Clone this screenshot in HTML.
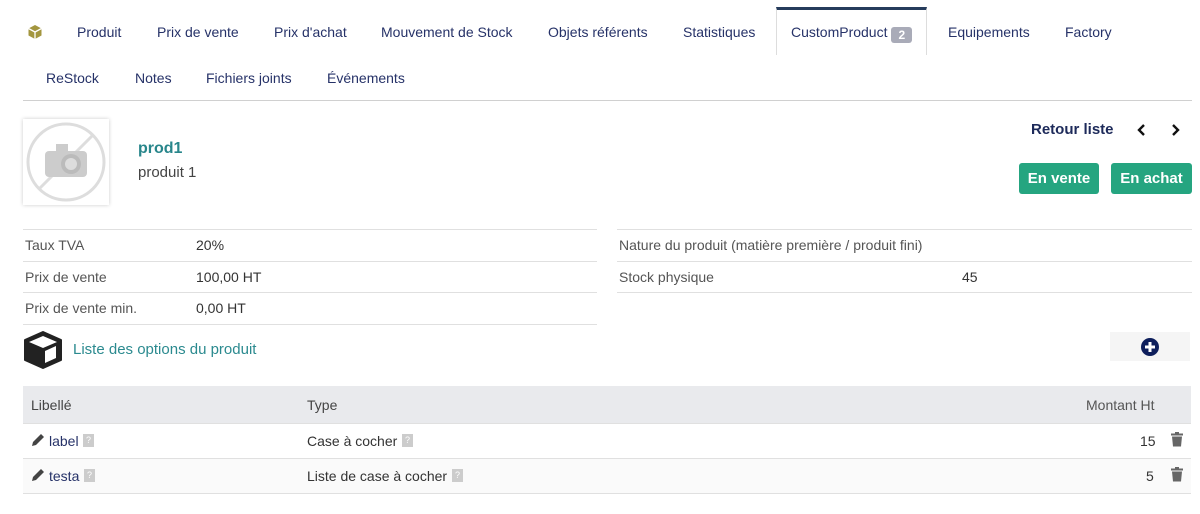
<!DOCTYPE html>
<html><head><meta charset="utf-8"><style>
*{margin:0;padding:0;box-sizing:border-box}
body{width:1200px;height:514px;background:#fff;font-family:"Liberation Sans",sans-serif;position:relative;overflow:hidden;color:#333}
.a{position:absolute;white-space:nowrap}
.tab{font-size:14px;color:#263268}
.l{font-size:14px;color:#555}
.v{font-size:14px;color:#333}
.hl{position:absolute;height:1px;background:#e0e0e0}
.q{position:absolute;width:11px;height:13px;background:#ccc;color:#fff;font-size:9px;text-align:center;line-height:13px}
</style></head><body>
<svg class="a" style="left:27px;top:24px" width="16" height="16" viewBox="0 0 16 16"><path d="M8 1l6.5 3.5v7L8 15 1.5 11.5v-7z" fill="#a3963f"/><path d="M8 8l6.5-3.5M8 8L1.5 4.5M8 8v7" stroke="#fff" stroke-width="1.3" fill="none"/></svg>
<div class="a tab" style="left:77px;top:24px">Produit</div>
<div class="a tab" style="left:157px;top:24px">Prix de vente</div>
<div class="a tab" style="left:274px;top:24px">Prix d'achat</div>
<div class="a tab" style="left:381px;top:24px">Mouvement de Stock</div>
<div class="a tab" style="left:548px;top:24px">Objets référents</div>
<div class="a tab" style="left:683px;top:24px">Statistiques</div>
<div class="a" style="left:776px;top:7px;width:151px;height:48px;border:1px solid #ddd;border-top:3px solid #263c5c;border-bottom:none;background:#fff"></div>
<div class="a tab" style="left:791px;top:24px">CustomProduct <span style="display:inline-block;background:#a9abb8;color:#fff;font-size:12px;font-weight:bold;width:21px;height:16px;line-height:16px;text-align:center;border-radius:3px;vertical-align:-2px">2</span></div>
<div class="a tab" style="left:948px;top:24px">Equipements</div>
<div class="a tab" style="left:1065px;top:24px">Factory</div>
<div class="a tab" style="left:46px;top:70px">ReStock</div>
<div class="a tab" style="left:135px;top:70px">Notes</div>
<div class="a tab" style="left:206px;top:70px">Fichiers joints</div>
<div class="a tab" style="left:327px;top:70px">Événements</div>
<div class="hl" style="left:23px;top:100px;width:1169px;background:#d0d0d0"></div>

<div class="a" style="left:23px;top:119px;width:86px;height:86px;background:#fff;box-shadow:0 0 4px rgba(0,0,0,.2)">
<svg width="86" height="86" viewBox="0 0 86 86"><circle cx="43" cy="43" r="38" stroke="#ddd" stroke-width="3" fill="none"/><line x1="16" y1="70" x2="70" y2="16" stroke="#ddd" stroke-width="3"/><rect x="22" y="32" width="42" height="26" rx="4" fill="#ccc"/><rect x="33" y="25" width="12" height="8" fill="#ccc"/><circle cx="48" cy="45" r="10" fill="#bbb"/><circle cx="48" cy="45" r="6" fill="#ddd"/></svg></div>
<div class="a" style="left:138px;top:140px;font-size:16px;font-weight:bold;color:#28868b">prod1</div>
<div class="a" style="left:138px;top:164px;font-size:15px;color:#444">produit 1</div>
<div class="a" style="left:1031px;top:121px;font-size:15px;font-weight:bold;color:#1d2a5a">Retour liste</div>
<svg class="a" style="left:1137px;top:123px" width="10" height="14" viewBox="0 0 10 14"><path d="M7 2L2 7l5 5" stroke="#111" stroke-width="2.4" fill="none"/></svg>
<svg class="a" style="left:1170px;top:123px" width="10" height="14" viewBox="0 0 10 14"><path d="M3 2l5 5-5 5" stroke="#111" stroke-width="2.4" fill="none"/></svg>
<div class="a" style="left:1019px;top:163px;width:80px;height:31px;background:#25a580;border-radius:3px;color:#fff;font-weight:bold;font-size:15px;text-align:center;line-height:31px">En vente</div>
<div class="a" style="left:1111px;top:163px;width:81px;height:31px;background:#25a580;border-radius:3px;color:#fff;font-weight:bold;font-size:15px;text-align:center;line-height:31px">En achat</div>

<div class="hl" style="left:23px;top:229px;width:574px"></div>
<div class="hl" style="left:23px;top:261px;width:574px"></div>
<div class="hl" style="left:23px;top:292px;width:574px"></div>
<div class="hl" style="left:23px;top:324px;width:574px"></div>
<div class="hl" style="left:617px;top:229px;width:575px"></div>
<div class="hl" style="left:617px;top:261px;width:575px"></div>
<div class="hl" style="left:617px;top:292px;width:575px"></div>
<div class="a l" style="left:25px;top:237px">Taux TVA</div><div class="a v" style="left:196px;top:237px">20%</div>
<div class="a l" style="left:25px;top:269px">Prix de vente</div><div class="a v" style="left:196px;top:269px">100,00 HT</div>
<div class="a l" style="left:25px;top:300px">Prix de vente min.</div><div class="a v" style="left:196px;top:300px">0,00 HT</div>
<div class="a l" style="left:619px;top:237px">Nature du produit (matière première / produit fini)</div>
<div class="a l" style="left:619px;top:269px">Stock physique</div><div class="a v" style="left:962px;top:269px">45</div>

<svg class="a" style="left:23px;top:331px" width="40" height="38" viewBox="0 0 40 38"><path d="M20 1L38 9v20L20 37 2 29V9z" fill="#222" stroke="#222" stroke-width="2" stroke-linejoin="round"/><path d="M6 11l14 6 14-6-14-6z" fill="#fff"/><path d="M22 20l11-5v12l-11 5z" fill="#fff"/></svg>
<div class="a" style="left:73px;top:341px;font-size:15px;color:#2b8a8f">Liste des options du produit</div>
<div class="a" style="left:1110px;top:332px;width:80px;height:29px;background:#f5f5f5"></div>
<svg class="a" style="left:1140px;top:337px" width="20" height="20" viewBox="0 0 20 20"><circle cx="10" cy="10" r="9" fill="#0e1f5c"/><path d="M10 5v10M5 10h10" stroke="#fff" stroke-width="3"/></svg>

<div class="a" style="left:23px;top:386px;width:1168px;height:37px;background:#e9eaed"></div>
<div class="a l" style="left:31px;top:397px;color:#444">Libellé</div>
<div class="a l" style="left:307px;top:397px;color:#444">Type</div>
<div class="a l" style="left:1086px;top:397px;color:#555">Montant Ht</div>
<div class="a" style="left:23px;top:458px;width:1168px;height:35px;background:#fafafa"></div>
<div class="hl" style="left:23px;top:423px;width:1168px"></div>
<div class="hl" style="left:23px;top:458px;width:1168px"></div>
<div class="hl" style="left:23px;top:493px;width:1168px"></div>
<svg class="a" style="left:31px;top:433px" width="14" height="14" viewBox="0 0 14 14"><path d="M1 13l1-4 8-8 3 3-8 8z" fill="#444"/></svg>
<div class="a v" style="left:49px;top:433px;color:#263268">label</div>
<div class="q" style="left:83px;top:434px">?</div>
<div class="a v" style="left:307px;top:433px">Case à cocher</div>
<div class="q" style="left:402px;top:434px">?</div>
<div class="a v" style="left:1140px;top:433px">15</div>
<svg class="a" style="left:1171px;top:432px" width="12" height="15" viewBox="0 0 12 15"><rect x="0" y="1.5" width="12" height="2" fill="#666"/><rect x="4" y="0" width="4" height="2" fill="#666"/><path d="M1 4.5h10l-1 10H2z" fill="#666"/></svg>
<svg class="a" style="left:31px;top:468px" width="14" height="14" viewBox="0 0 14 14"><path d="M1 13l1-4 8-8 3 3-8 8z" fill="#444"/></svg>
<div class="a v" style="left:49px;top:468px;color:#263268">testa</div>
<div class="q" style="left:84px;top:469px">?</div>
<div class="a v" style="left:307px;top:468px">Liste de case à cocher</div>
<div class="q" style="left:452px;top:469px">?</div>
<div class="a v" style="left:1146px;top:468px">5</div>
<svg class="a" style="left:1171px;top:467px" width="12" height="15" viewBox="0 0 12 15"><rect x="0" y="1.5" width="12" height="2" fill="#666"/><rect x="4" y="0" width="4" height="2" fill="#666"/><path d="M1 4.5h10l-1 10H2z" fill="#666"/></svg>
</body></html>
